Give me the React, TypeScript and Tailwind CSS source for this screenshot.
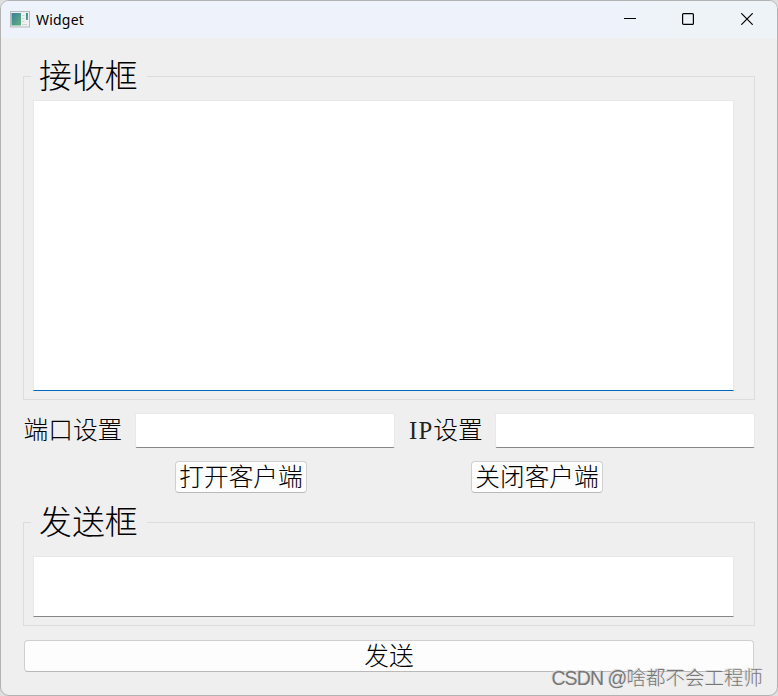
import { ReactNode } from 'react';

interface GroupBoxProps {
  title: string;
  className: string;
  children: ReactNode;
}

function GroupBox({ title, className, children }: GroupBoxProps) {
  return (
    <fieldset className={`w-[732px] border border-[#dcdcdc] pr-[20px] pl-[9px] ${className}`}>
      <legend className="-ml-[2px] h-[37px] w-[116px] pl-[8px] text-[32.9px] leading-[39px] whitespace-nowrap">
        {title}
      </legend>
      {children}
    </fieldset>
  );
}

function PushButton({ text, className }: { text: string; className: string }) {
  return (
    <button
      type="button"
      className={`h-[32px] rounded-[4px] border border-[#d0d0d0] border-b-[#b9b9b9] bg-[#fdfdfd] text-[24.7px] leading-[29px] whitespace-nowrap ${className}`}
    >
      {text}
    </button>
  );
}

function LineEdit() {
  return (
    <input
      type="text"
      className="h-[35px] w-[260px] rounded-[2px] border border-[#e8e8e8] border-b-[#868686] bg-white px-2 text-[20px] outline-none"
    />
  );
}

function AppIcon() {
  return (
    <svg className="h-[17px] w-[20px]" viewBox="0 0 20 17">
      <defs>
        <linearGradient id="screen" x1="0" y1="0" x2="1" y2="1">
          <stop offset="0" stopColor="#397f9b" />
          <stop offset="1" stopColor="#60b17c" />
        </linearGradient>
      </defs>
      <rect x="0.5" y="0.5" width="19" height="15.5" fill="#eef0f1" stroke="#b5babd" />
      <rect x="1.5" y="2" width="9.5" height="12.5" fill="url(#screen)" />
      <path d="M12 4.5h2.5M12 7.5h2.5M12 10.5h2.5M12 13.5h5" stroke="#d0d3d5" />
      <rect x="16" y="2" width="2" height="7" fill="url(#screen)" />
    </svg>
  );
}

function TitleBar() {
  return (
    <header className="flex h-[37px] items-center bg-gradient-to-r from-[#eef3fb] from-80% to-[#eef3f7] to-90% pl-[9px]">
      <AppIcon />
      <h1 className="ml-[6px] font-['Noto_Sans','Open_Sans',sans-serif] text-[14px] leading-none font-normal tracking-[0.2px]">
        Widget
      </h1>
      <div className="mr-[24px] ml-auto flex items-center pb-px">
        <svg className="mr-[46px] h-3 w-3" viewBox="0 0 12 12">
          <path d="M0 5.5h12" stroke="#000" />
        </svg>
        <svg className="mr-[47px] h-3 w-3" viewBox="0 0 12 12" fill="none">
          <rect x="0.6" y="0.6" width="10.8" height="10.8" rx="1" stroke="#000" strokeWidth="1.2" />
        </svg>
        <svg className="h-3 w-3" viewBox="0 0 12 12">
          <path d="M0.3 0.3l11.4 11.4M11.7 0.3L0.3 11.7" stroke="#000" strokeWidth="1.2" />
        </svg>
      </div>
    </header>
  );
}

export default function App() {
  return (
    <div className="h-[696px] w-[778px] bg-[#dedede]">
      <div className="relative flex h-[696px] w-[778px] flex-col overflow-hidden rounded-[9px] border border-[#b2b2b2] bg-[#efefef] font-['Liberation_Serif','Noto_Sans_CJK_SC',serif] font-light text-black">
        <TitleBar />
        <main className="flex flex-col pt-[20px] pl-[22px]">
          <GroupBox title="接收框" className="h-[342px] pt-[5px]">
            <textarea className="block h-[291px] w-[701px] resize-none border border-[#e8e8e8] border-b-[#0067c0] bg-white p-2 outline-none" />
          </GroupBox>

          <div className="mt-[13px] flex items-center text-[24.7px] leading-[35px] whitespace-nowrap">
            <label className="w-[112px] pl-[0.5px]">端口设置</label>
            <LineEdit />
            <label className="w-[100px] pl-[14px]">
              <span className="tracking-[1.2px] text-[#222]">IP</span>设置
            </label>
            <LineEdit />
          </div>

          <div className="mt-[13px] flex gap-[164px] pl-[152px]">
            <PushButton text="打开客户端" className="w-[132px]" />
            <PushButton text="关闭客户端" className="w-[132px]" />
          </div>

          <GroupBox title="发送框" className="mt-[11px] h-[122px] pt-[15px]">
            <textarea className="block h-[61px] w-[701px] resize-none border border-[#e8e8e8] border-b-[#868686] bg-white p-2 outline-none" />
          </GroupBox>

          <PushButton text="发送" className="mt-[14px] ml-px w-[730px]" />
        </main>
        <span className="absolute right-[14px] bottom-[3px] font-['Liberation_Sans','Noto_Sans_CJK_SC',sans-serif] text-[19.5px] leading-[28px] font-light whitespace-nowrap text-[#777] [text-shadow:-1px_-1px_0_#dcdcdc]">
          <span className="tracking-[-0.9px]">CSDN @</span>啥都不会工程师
        </span>
      </div>
    </div>
  );
}
